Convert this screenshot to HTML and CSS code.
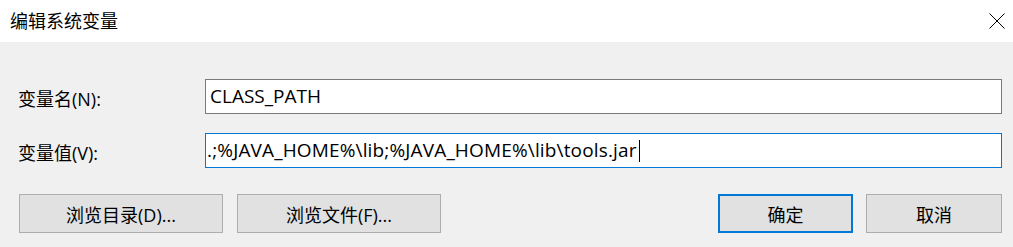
FILE: index.html
```html
<!DOCTYPE html>
<html lang="zh-CN">
<head>
<meta charset="utf-8">
<title>编辑系统变量</title>
<link rel="stylesheet" href="styles.css">
</head>
<body>
<div class="dialog">
  <div class="titlebar">
    <span class="title">编辑系统变量</span>
    <span class="close" aria-label="关闭">
      <svg width="16" height="16" viewBox="0 0 16 16"><path d="M0.5 0.5L15.5 15.5M15.5 0.5L0.5 15.5" stroke="#000" stroke-width="1" fill="none"/></svg>
    </span>
  </div>
  <div class="content">
    <div class="form">
      <label class="label">变量名(N):</label>
      <div class="field">CLASS_PATH</div>
      <label class="label">变量值(V):</label>
      <div class="field focused">.;%JAVA_HOME%\lib;%JAVA_HOME%\lib\tools.jar<span class="caret"></span></div>
    </div>
    <div class="buttons">
      <button class="btn wide">浏览目录(D)...</button>
      <button class="btn wide">浏览文件(F)...</button>
      <span class="spacer"></span>
      <button class="btn narrow default">确定</button>
      <button class="btn narrow">取消</button>
    </div>
  </div>
</div>
</body>
</html>
```

FILE: styles.css
```css
html, body {
  margin: 0;
  padding: 0;
}
body {
  font-family: "Open Sans", "Noto Sans CJK SC", sans-serif;
  color: #000;
  background: #f0f0f0;
}
.dialog {
  width: 1013px;
  height: 247px;
  background: #f0f0f0;
  display: flex;
  flex-direction: column;
}
.titlebar {
  height: 42px;
  background: #fff;
  display: flex;
  align-items: center;
  padding-left: 10px;
  padding-right: 8px;
  box-sizing: border-box;
}
.title {
  font-family: "Noto Sans CJK SC", sans-serif;
  font-size: 18px;
  flex: 1;
  margin-top: -2px;
}
.close {
  width: 16px;
  height: 16px;
  display: flex;
}
.content {
  padding: 37px 11px 0 18px;
}
.form {
  display: grid;
  grid-template-columns: 187px 1fr;
  row-gap: 19px;
  align-items: center;
}
.label {
  font-size: 18px;
  padding-top: 2px;
}
.field {
  height: 35px;
  box-sizing: border-box;
  background: #fff;
  border: 1px solid #7a7a7a;
  font-size: 19px;
  line-height: 33px;
  padding-left: 4px;
  white-space: nowrap;
  display: flex;
  align-items: center;
}
.field.focused {
  border-color: #0078d7;
  padding-left: 1px;
  letter-spacing: 0.15px;
}
.caret {
  display: inline-block;
  width: 1px;
  height: 22px;
  background: #000;
  margin-left: 2px;
}
.buttons {
  display: flex;
  margin-top: 26px;
  margin-left: 1px;
}
.btn {
  font-family: "Open Sans", "Noto Sans CJK SC", sans-serif;
  font-size: 18px;
  height: 39px;
  background: #e1e1e1;
  border: 1px solid #adadad;
  box-sizing: border-box;
  padding: 0;
  color: #000;
}
.btn.wide {
  width: 204px;
  margin-right: 14px;
}
.btn.narrow {
  width: 136px;
}
.btn.default {
  border: 2px solid #0078d7;
  width: 135px;
  margin-right: 13px;
}
.spacer {
  flex: 1;
}
```
